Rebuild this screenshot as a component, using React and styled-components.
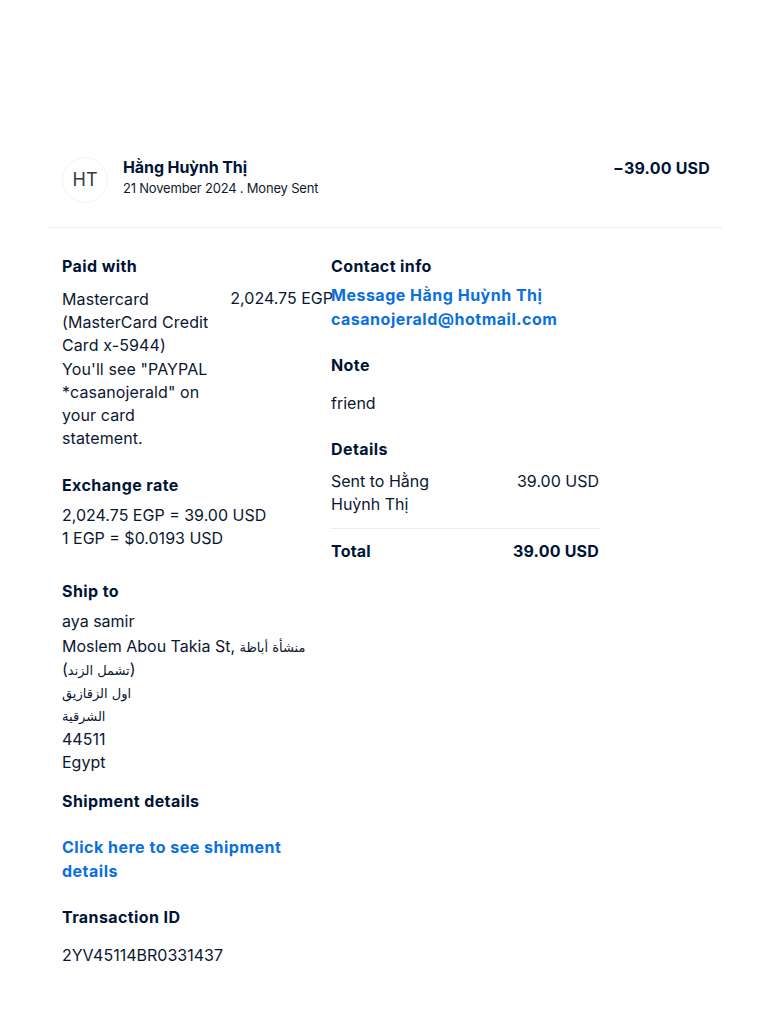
import React from "react";
import styled, { createGlobalStyle } from "styled-components";

const GlobalStyle = createGlobalStyle`
  body {
    margin: 0;
    background: #ffffff;
    font-family: "Inter", "DejaVu Sans", sans-serif;
    color: #0b1730;
  }
`;

const Page = styled.div`
  padding: 156px 0 40px 47px;
`;

const Card = styled.div`
  width: 675px;
`;

const Header = styled.div`
  display: flex;
  align-items: center;
  padding: 0 12px 0 15px;
  height: 46px;
`;

const Avatar = styled.div`
  width: 44px;
  height: 44px;
  border-radius: 50%;
  border: 1px solid #f3f3f3;
  display: flex;
  align-items: center;
  justify-content: center;
  font-size: 18px;
  color: #333a44;
  flex-shrink: 0;
  margin-top: 1px;
`;

const Who = styled.div`
  margin-left: 15px;
  flex: 1;
  display: flex;
  flex-direction: column;
  margin-top: -2px;
`;

const Name = styled.div`
  font-size: 16px;
  line-height: 20px;
  font-weight: 700;
  color: #001435;
  letter-spacing: -0.1px;
`;

const Meta = styled.div`
  font-size: 13px;
  line-height: 22px;
  color: #111a2e;
  letter-spacing: -0.2px;
`;

const Amount = styled.div`
  align-self: flex-start;
  font-size: 16px;
  line-height: 24px;
  font-weight: 700;
  color: #001435;
  letter-spacing: 0.2px;
`;

const Divider = styled.hr`
  border: none;
  border-top: 1px solid #ebebeb;
  margin: 25px 0 0;
`;

const Columns = styled.div`
  display: grid;
  grid-template-columns: 269px 269px;
  padding-left: 15px;
  padding-top: 26px;
`;

const Column = styled.div`
  display: flex;
  flex-direction: column;
`;

const Section = styled.div`
  margin-top: ${(p) => p.$top || 0}px;
`;

const Heading = styled.div`
  font-size: 16px;
  line-height: 24px;
  font-weight: 700;
  color: #001435;
  letter-spacing: 0.4px;
  margin-bottom: ${(p) => p.$gap || 0}px;
`;

const Text = styled.div`
  font-size: 16px;
  line-height: ${(p) => p.$lh || 23}px;
  height: ${(p) => p.$lh || 23}px;
  color: #0b1730;
`;

const Link = styled.a`
  display: block;
  font-size: 16px;
  line-height: 24px;
  font-weight: 700;
  letter-spacing: 0.5px;
  color: #0a6fe0;
  text-decoration: none;
  cursor: pointer;
`;

const PaidRow = styled.div`
  display: flex;
  justify-content: space-between;
  align-items: flex-start;
`;

const PaidText = styled.div`
  width: 156px;
  font-size: 16px;
  line-height: 23.2px;
  letter-spacing: 0.1px;
`;

const PaidAmount = styled.div`
  font-size: 16px;
  line-height: 23px;
  white-space: nowrap;
  margin-right: -2px;
  margin-top: -1px;
`;

const Arabic = styled.span`
  font-size: 13px;
  line-height: 1;
  font-family: "DejaVu Sans", sans-serif;
`;

const LineRow = styled.div`
  display: flex;
  justify-content: space-between;
  align-items: flex-start;
  padding-bottom: ${(p) => p.$pb || 0}px;
  border-bottom: ${(p) => (p.$line ? "1px solid #ebebeb" : "none")};
  margin-bottom: ${(p) => p.$mb || 0}px;
`;

const LineLabel = styled.div`
  width: 140px;
  font-size: 16px;
  line-height: 23px;
  font-weight: ${(p) => (p.$bold ? 700 : 400)};
  color: ${(p) => (p.$bold ? "#001435" : "#0b1730")};
  letter-spacing: ${(p) => (p.$bold ? "0.2px" : "0")};
`;

const LineValue = styled(LineLabel)`
  width: auto;
  white-space: nowrap;
  margin-right: 1px;
`;

export default function App() {
  return (
    <Page>
      <GlobalStyle />
      <Card>
        <Header>
          <Avatar>HT</Avatar>
          <Who>
            <Name>Hằng Huỳnh Thị</Name>
            <Meta>21 November 2024 . Money Sent</Meta>
          </Who>
          <Amount>−39.00 USD</Amount>
        </Header>
        <Divider />
        <Columns>
          <Column>
            <Section>
              <Heading $gap={10}>Paid with</Heading>
              <PaidRow>
                <PaidText>
                  Mastercard
                  <br />
                  (MasterCard Credit Card x-5944)
                  <br />
                  You'll see "PAYPAL *casanojerald" on your card statement.
                </PaidText>
                <PaidAmount>2,024.75 EGP</PaidAmount>
              </PaidRow>
            </Section>
            <Section $top={23}>
              <Heading $gap={7}>Exchange rate</Heading>
              <Text>2,024.75 EGP = 39.00 USD</Text>
              <Text>1 EGP = $0.0193 USD</Text>
            </Section>
            <Section $top={29}>
              <Heading $gap={4}>Ship to</Heading>
              <Text $lh={28}>aya samir</Text>
              <Text>
                Moslem Abou Takia St, <Arabic>منشأة أباظة</Arabic>
              </Text>
              <Text>
                (<Arabic>تشمل الزند</Arabic>)
              </Text>
              <Text>
                <Arabic>اول الزقازيق</Arabic>
              </Text>
              <Text>
                <Arabic>الشرقية</Arabic>
              </Text>
              <Text $lh={24}>44511</Text>
              <Text>Egypt</Text>
            </Section>
            <Section $top={15}>
              <Heading $gap={22}>Shipment details</Heading>
              <Link>
                Click here to see shipment
                <br />
                details
              </Link>
            </Section>
            <Section $top={22}>
              <Heading $gap={15}>Transaction ID</Heading>
              <Text>2YV45114BR0331437</Text>
            </Section>
          </Column>
          <Column>
            <Section>
              <Heading $gap={5}>Contact info</Heading>
              <Link>Message Hằng Huỳnh Thị</Link>
              <Link>casanojerald@hotmail.com</Link>
            </Section>
            <Section $top={22}>
              <Heading $gap={15}>Note</Heading>
              <Text>friend</Text>
            </Section>
            <Section $top={22}>
              <Heading $gap={9}>Details</Heading>
              <LineRow $line $pb={12} $mb={11}>
                <LineLabel>Sent to Hằng Huỳnh Thị</LineLabel>
                <LineValue>39.00 USD</LineValue>
              </LineRow>
              <LineRow>
                <LineLabel $bold>Total</LineLabel>
                <LineValue $bold>39.00 USD</LineValue>
              </LineRow>
            </Section>
          </Column>
        </Columns>
      </Card>
    </Page>
  );
}
